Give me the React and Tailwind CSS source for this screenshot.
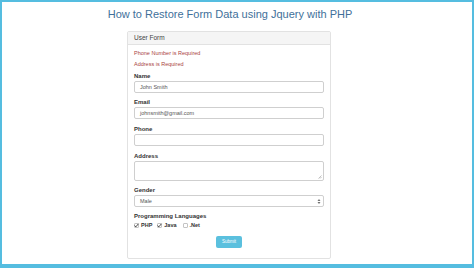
import React from "react";

const font = { fontFamily: '"Liberation Sans", Arial, sans-serif' };

function Check({ checked }) {
  return (
    <span className="inline-flex h-[5px] w-[5px] items-center justify-center rounded-[1px] border border-[#c4c4c4] bg-white">
      {checked && (
        <svg width="5" height="5" viewBox="0 0 5 5" className="overflow-visible">
          <path d="M0.6 2.6 L1.9 3.8 L4.4 0.8" stroke="#333" strokeWidth="0.9" fill="none" />
        </svg>
      )}
    </span>
  );
}

function Label({ children, className = "" }) {
  return (
    <div className={"h-[8px] text-[6px] font-bold leading-[8px] text-[#333] " + className}>{children}</div>
  );
}

function Input({ value, h = "h-[12px]" }) {
  return (
    <div className={"mt-[1px] flex items-center rounded-[2px] border border-[#cfcfcf] bg-white px-[5px] text-[5.5px] text-[#555] " + h}>
      {value}
    </div>
  );
}

export default function App() {
  return (
    <div style={font} className="h-[268px] w-[474px] overflow-hidden border-b-4 border-l-2 border-r-2 border-t-2 border-[#55bde0] bg-white">
      <div className="mt-[5px] h-[14px] pr-[14px] text-center text-[11px] leading-[14px] text-[#41709a]">
        How to Restore Form Data using Jquery with PHP
      </div>
      <div className="ml-[125px] mt-[10px] w-[204px] rounded-[2px] border border-[#e2e2e2] bg-white">
        <div className="flex h-[13px] items-center border-b border-[#e2e2e2] bg-[#f5f5f5] px-[6px] text-[6.5px] text-[#444]">
          User Form
        </div>
        <div className="px-[6px] pb-[10px] pt-[4px]">
          <div className="h-[8px] text-[5.5px] leading-[8px] text-[#a94442]">Phone Number is Required</div>
          <div className="mt-[3px] h-[8px] text-[5.5px] leading-[8px] text-[#a94442]">Address is Required</div>
          <Label className="mt-[4px]">Name</Label>
          <Input value="John Smith" />
          <Label className="mt-[5px]">Email</Label>
          <Input value="johnsmith@gmail.com" />
          <Label className="mt-[6px]">Phone</Label>
          <Input value="" />
          <Label className="mt-[6px]">Address</Label>
          <div className="relative mt-[1px] h-[20px] rounded-[2px] border border-[#cfcfcf] bg-white">
            <svg width="4" height="4" viewBox="0 0 4 4" className="absolute bottom-[1px] right-[1px]">
              <path d="M0.5 3.5 L3.5 0.5 M2 3.5 L3.5 2" stroke="#999" strokeWidth="0.6" />
            </svg>
          </div>
          <Label className="mt-[5px]">Gender</Label>
          <div className="mt-[1px] flex h-[12px] items-center justify-between rounded-[2px] border border-[#cfcfcf] bg-white pl-[5px] pr-[2px] text-[5.5px] text-[#555]">
            <span>Male</span>
            <svg width="4" height="5" viewBox="0 0 4 5">
              <path d="M0.5 1.8 L2 0.3 L3.5 1.8 Z M0.5 3.2 L2 4.7 L3.5 3.2 Z" fill="#444" />
            </svg>
          </div>
          <Label className="mt-[5px]">Programming Languages</Label>
          <div className="mt-[1px] flex h-[8px] items-center text-[5.5px] font-bold text-[#333]">
            <Check checked />
            <span className="ml-[2px]">PHP</span>
            <span className="ml-[5px] flex items-center">
              <Check checked />
              <span className="ml-[2px]">Java</span>
            </span>
            <span className="ml-[6px] flex items-center">
              <Check />
              <span className="ml-[2px]">.Net</span>
            </span>
          </div>
          <div className="mt-[7px] flex justify-center">
            <div className="flex h-[12px] w-[26px] items-center justify-center rounded-[2px] bg-[#5bc0de] text-[4.5px] text-white">
              Submit
            </div>
          </div>
        </div>
      </div>
    </div>
  );
}
